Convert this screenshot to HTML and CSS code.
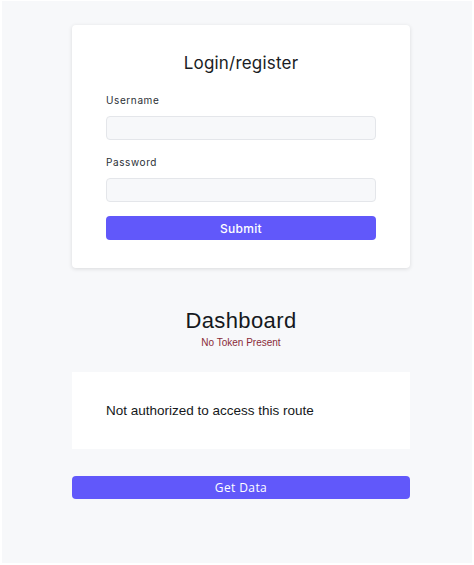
FILE: index.html
```html
<!DOCTYPE html>
<html>
<head>
<meta charset="utf-8">
<link rel="stylesheet" href="styles.css">
</head>
<body>
<div class="page">
  <div class="wrap">
    <form class="card">
      <h1 class="card-title">Login/register</h1>
      <label class="label">Username</label>
      <div class="input"></div>
      <label class="label label-pw">Password</label>
      <div class="input"></div>
      <div class="btn btn-submit">Submit</div>
    </form>
    <h2 class="dash-title">Dashboard</h2>
    <div class="token">No Token Present</div>
    <div class="panel">Not authorized to access this route</div>
    <div class="btn btn-get">Get Data</div>
  </div>
</div>
</body>
</html>
```
FILE: styles.css
```css
html { background: #ffffff; }
body { margin: 0; }
.page {
  margin: 1px 2px 2px 2px;
  height: 562px;
  background: #f7f8fa;
  box-sizing: border-box;
  padding-top: 24px;
}
.wrap {
  width: 338px;
  margin-left: 70px;
  display: flex;
  flex-direction: column;
}
.card {
  background: #fff;
  border-radius: 4px;
  box-shadow: 0 1px 4px rgba(0,0,0,0.12);
  padding: 26px 34px 28px;
  display: flex;
  flex-direction: column;
  font-family: Inter, "Liberation Sans", sans-serif;
}
.card-title {
  margin: 0;
  text-align: center;
  font-size: 17px;
  line-height: 24px;
  font-weight: 400;
  color: #1a1d24;
  letter-spacing: 0.2px;
}
.label {
  margin-top: 18px;
  font-size: 10px;
  line-height: 14px;
  letter-spacing: 0.6px;
  color: #2b2f36;
}
.label-pw { margin-top: 15px; }
.input {
  margin-top: 9px;
  height: 24px;
  box-sizing: border-box;
  background: #f7f8fa;
  border: 1px solid #e4e6ea;
  border-radius: 4px;
}
.btn {
  background: #6158fa;
  color: #fff;
  border-radius: 4px;
  height: 24px;
  display: flex;
  align-items: center;
  justify-content: center;
  font-family: "Open Sans", "Liberation Sans", sans-serif;
  font-size: 12.5px;
  letter-spacing: 0.2px;
}
.btn-submit {
  margin-top: 14px;
  font-family: Inter, "Liberation Sans", sans-serif;
  font-weight: 500;
  font-size: 12px;
  letter-spacing: 0.3px;
}
.dash-title {
  margin: 39px 0 0;
  text-align: center;
  font-family: "Liberation Sans", Arial, sans-serif;
  font-size: 22px;
  line-height: 28px;
  font-weight: 400;
  color: #151820;
  letter-spacing: 0.4px;
}
.token {
  text-align: center;
  font-family: "Liberation Sans", Arial, sans-serif;
  font-size: 10px;
  line-height: 12px;
  color: #8a2b38;
  margin-top: 2px;
}
.panel {
  margin-top: 23px;
  background: #fff;
  height: 77px;
  box-sizing: border-box;
  padding-left: 34px;
  display: flex;
  align-items: center;
  font-family: "Liberation Sans", Arial, sans-serif;
  font-size: 13.5px;
  color: #151820;
}
.btn-get { margin-top: 27px; height: 23px; font-size: 12px; letter-spacing: 0.4px; }
```
